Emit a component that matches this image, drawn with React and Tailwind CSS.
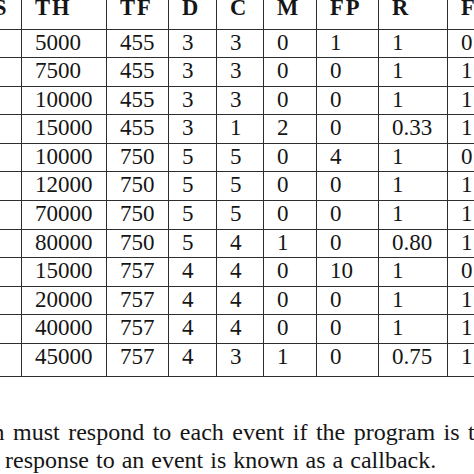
import React from "react";

const cols = "grid grid-cols-[21px_85px_62px_48px_47px_53px_62px_69px_1fr]";

const head = ["S", "TH", "TF", "D", "C", "M", "FP", "R", "F"];

const rows = [
  ["5000", "455", "3", "3", "0", "1", "1", "0"],
  ["7500", "455", "3", "3", "0", "0", "1", "1"],
  ["10000", "455", "3", "3", "0", "0", "1", "1"],
  ["15000", "455", "3", "1", "2", "0", "0.33", "1"],
  ["10000", "750", "5", "5", "0", "4", "1", "0"],
  ["12000", "750", "5", "5", "0", "0", "1", "1"],
  ["70000", "750", "5", "5", "0", "0", "1", "1"],
  ["80000", "750", "5", "4", "1", "0", "0.80", "1"],
  ["15000", "757", "4", "4", "0", "10", "1", "0"],
  ["20000", "757", "4", "4", "0", "0", "1", "1"],
  ["40000", "757", "4", "4", "0", "0", "1", "1"],
  ["45000", "757", "4", "3", "1", "0", "0.75", "1"],
];

const App = () => {
  return (
    <div
      className="w-[474px] h-[474px] overflow-hidden bg-white text-[#151515]"
      style={{ fontFamily: '"Liberation Serif", "Times New Roman", serif' }}
    >
      {/* header */}
      <div className={`${cols} h-[29.75px] border-b-[1.5px] border-[#2e2e2e]`}>
        {head.map((h, i) => (
          <div
            key={i}
            className={`font-bold text-[22.5px] leading-[16px] tracking-[2px] whitespace-nowrap ${
              i === 0 ? "overflow-hidden" : "border-l-[1.5px] border-[#2e2e2e] pl-[13px]"
            }`}
          >
            <div className={i === 0 ? "-ml-[6px]" : ""}>{h}</div>
          </div>
        ))}
      </div>

      {/* body */}
      {rows.map((r, ri) => (
        <div
          key={ri}
          className={`${cols} border-b-[1.5px] border-[#2e2e2e] ${
            ri === rows.length - 1 ? "h-[33.5px]" : "h-[28.55px]"
          }`}
        >
          <div />
          {r.map((c, ci) => (
            <div
              key={ci}
              className="border-l-[1.5px] border-[#2e2e2e] pl-[13px] pt-[1px] text-[23px] leading-[23px] whitespace-nowrap overflow-hidden"
            >
              {c}
            </div>
          ))}
        </div>
      ))}

      {/* running text below the table */}
      <div className="mt-[41px] text-[24px] leading-[28px] whitespace-nowrap">
        <div className="-ml-[7.5px] [word-spacing:2.5px]">n must respond to each event if the program is to</div>
        <div className="ml-[5px] [word-spacing:1px]">response to an event is known as a callback.</div>
      </div>
    </div>
  );
};

export default App;
